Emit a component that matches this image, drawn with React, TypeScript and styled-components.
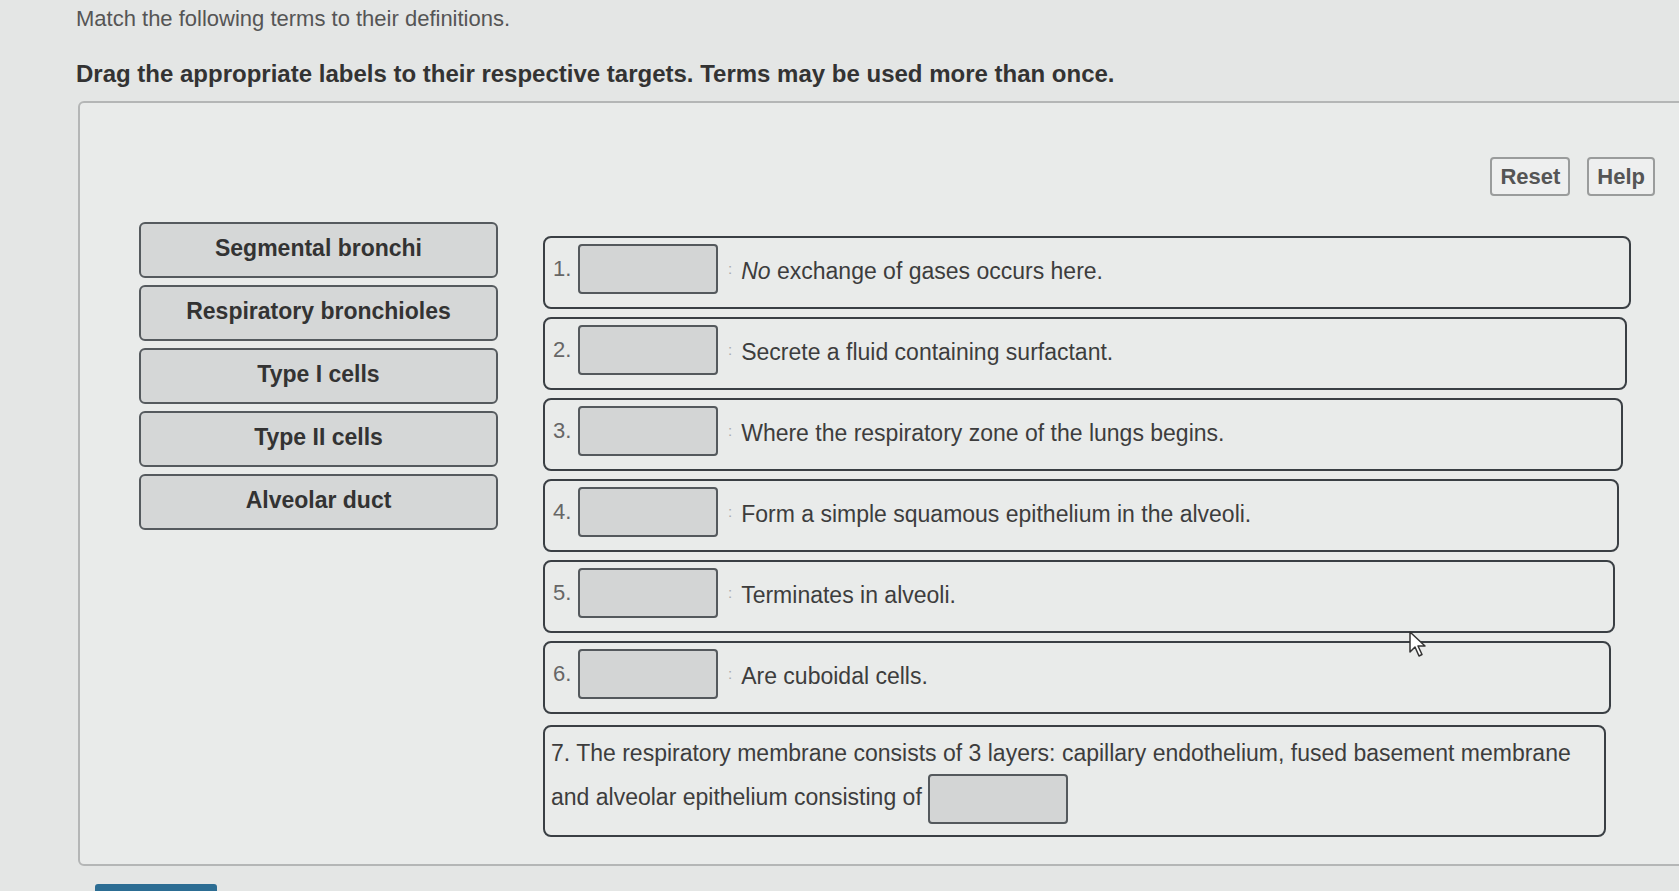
import styled, { createGlobalStyle } from "styled-components";
import { FC } from "react";

const GlobalStyle = createGlobalStyle`
  html, body {
    margin: 0;
    padding: 0;
    height: 891px;
    overflow: hidden;
    background: #e4e6e5;
    font-family: "Liberation Sans", Arial, sans-serif;
  }
`;

const StyledPage = styled.div`
  position: relative;
  padding: 6px 0 0 76px;
  width: 1679px;
  box-sizing: border-box;
`;

const StyledInstruction = styled.p`
  margin: 0;
  font-size: 22px;
  line-height: 26px;
  color: #555;
`;

const StyledDirections = styled.p`
  margin: 28px 0 0;
  font-size: 24px;
  line-height: 28px;
  font-weight: 700;
  color: #333;
`;

const StyledPanel = styled.div`
  margin: 13px 0 0 2px;
  width: 1620px;
  height: 765px;
  box-sizing: border-box;
  padding: 54px 41px 0 59px;
  border: 2px solid #b4b6b6;
  border-radius: 6px;
  background: #e9ebea;
`;

const StyledToolbar = styled.div`
  display: flex;
  justify-content: flex-end;
  gap: 17px;
`;

const StyledToolButton = styled.button`
  height: 39px;
  padding: 0 8px;
  font-family: "Liberation Sans", Arial, sans-serif;
  font-size: 22px;
  font-weight: 700;
  color: #555;
  background: #eeefef;
  border: 2px solid #9a9c9c;
  border-radius: 4px;
`;

const StyledBoard = styled.div`
  display: flex;
  align-items: flex-start;
  gap: 45px;
  margin-top: 26px;
`;

const StyledLabelColumn = styled.div`
  display: flex;
  flex-direction: column;
  gap: 7px;
  width: 359px;
`;

const StyledLabel = styled.div`
  height: 56px;
  box-sizing: border-box;
  display: flex;
  align-items: center;
  justify-content: center;
  padding-bottom: 4px;
  background: #d5d7d7;
  border: 2px solid #555a5e;
  border-radius: 6px;
  font-size: 23px;
  font-weight: 700;
  color: #333;
`;

const StyledTargetColumn = styled.div`
  display: flex;
  flex-direction: column;
  gap: 8px;
  margin-top: 14px;
`;

interface StyledTargetRowProps {
  $width: number;
}

const StyledTargetRow = styled.div<StyledTargetRowProps>`
  width: ${({ $width }) => $width}px;
  height: 73px;
  box-sizing: border-box;
  display: flex;
  align-items: center;
  padding: 2px 0 10px 8px;
  border: 2px solid #3a3f44;
  border-radius: 8px;
  font-size: 23px;
  color: #3d3d3d;
`;

const StyledNumber = styled.span`
  width: 25px;
  font-size: 22px;
  color: #666;
`;

const StyledDropBox = styled.span`
  display: inline-block;
  width: 140px;
  height: 50px;
  box-sizing: border-box;
  background: #d3d5d5;
  border: 2px solid #54595d;
  border-radius: 4px;
  vertical-align: middle;
`;

const StyledColon = styled.span`
  margin: 0 9px 0 10px;
  font-size: 15px;
  color: #aaa;
`;

const StyledDefinition = styled.span`
  padding-top: 6px;
`;

const StyledSentenceRow = styled.div`
  width: 1063px;
  height: 112px;
  margin-top: 3px;
  box-sizing: border-box;
  padding: 6px 8px 0 6px;
  border: 2px solid #3a3f44;
  border-radius: 8px;
  font-size: 23px;
  line-height: 41px;
  color: #3d3d3d;
`;

const StyledNextButton = styled.div`
  margin: 18px 0 0 19px;
  width: 122px;
  height: 40px;
  background: #2c6d93;
  border-radius: 3px;
`;

const StyledCursor = styled.svg`
  position: absolute;
  left: 1408px;
  top: 630px;
`;

const labels = [
  "Segmental bronchi",
  "Respiratory bronchioles",
  "Type I cells",
  "Type II cells",
  "Alveolar duct",
];

const definitions = [
  { text: "exchange of gases occurs here.", lead: "No" },
  { text: "Secrete a fluid containing surfactant." },
  { text: "Where the respiratory zone of the lungs begins." },
  { text: "Form a simple squamous epithelium in the alveoli." },
  { text: "Terminates in alveoli." },
  { text: "Are cuboidal cells." },
];

interface TargetRowProps {
  index: number;
  text: string;
  lead?: string;
}

const TargetRow: FC<TargetRowProps> = ({ index, text, lead }) => {
  return (
    <StyledTargetRow $width={1088 - index * 4}>
      <StyledNumber>{index + 1}.</StyledNumber>
      <StyledDropBox />
      <StyledColon>:</StyledColon>
      <StyledDefinition>
        {lead && <em>{lead} </em>}
        {text}
      </StyledDefinition>
    </StyledTargetRow>
  );
};

export default function App() {
  return (
    <>
      <GlobalStyle />
      <StyledPage>
        <StyledInstruction>Match the following terms to their definitions.</StyledInstruction>
        <StyledDirections>
          Drag the appropriate labels to their respective targets. Terms may be used more than once.
        </StyledDirections>

        <StyledPanel>
          <StyledToolbar>
            <StyledToolButton>Reset</StyledToolButton>
            <StyledToolButton>Help</StyledToolButton>
          </StyledToolbar>

          <StyledBoard>
            <StyledLabelColumn>
              {labels.map(label => {
                return <StyledLabel key={label}>{label}</StyledLabel>;
              })}
            </StyledLabelColumn>

            <StyledTargetColumn>
              {definitions.map((definition, index) => {
                return (
                  <TargetRow
                    key={definition.text}
                    index={index}
                    text={definition.text}
                    lead={definition.lead}
                  />
                );
              })}
              <StyledSentenceRow>
                7. The respiratory membrane consists of 3 layers: capillary endothelium, fused basement membrane
                <br />
                and alveolar epithelium consisting of <StyledDropBox />
              </StyledSentenceRow>
            </StyledTargetColumn>
          </StyledBoard>
        </StyledPanel>

        <StyledNextButton />

        <StyledCursor width="22" height="30" viewBox="0 0 22 30">
          <path
            d="M2 2 L2 22 L7 17 L11 26 L14 24.5 L10 16 L17 16 Z"
            fill="#fff"
            stroke="#333"
            strokeWidth="1.5"
            strokeLinejoin="round"
          />
        </StyledCursor>
      </StyledPage>
    </>
  );
}
